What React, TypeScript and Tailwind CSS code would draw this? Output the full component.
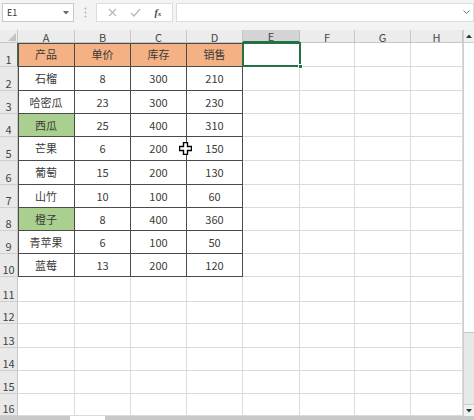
import React from 'react';

const cols = [
  { key: 'A', w: 'w-[57px]' },
  { key: 'B', w: 'w-[56px]' },
  { key: 'C', w: 'w-[56px]' },
  { key: 'D', w: 'w-[56px]' },
  { key: 'E', w: 'w-[57px]' },
  { key: 'F', w: 'w-[55px]' },
  { key: 'G', w: 'w-[56px]' },
  { key: 'H', w: 'w-[52px]' },
];

const rowHeights = [
  'h-[24px]', 'h-[24px]', 'h-[23px]', 'h-[23px]', 'h-[24px]', 'h-[24px]', 'h-[23px]', 'h-[23px]',
  'h-[23px]', 'h-[23px]', 'h-[25px]', 'h-[22px]', 'h-[24px]', 'h-[23px]', 'h-[23px]', 'h-[22px]',
];

const table: string[][] = [
  ['产品', '单价', '库存', '销售'],
  ['石榴', '8', '300', '210'],
  ['哈密瓜', '23', '300', '230'],
  ['西瓜', '25', '400', '310'],
  ['芒果', '6', '200', '150'],
  ['葡萄', '15', '200', '130'],
  ['山竹', '10', '100', '60'],
  ['橙子', '8', '400', '360'],
  ['青苹果', '6', '100', '50'],
  ['蓝莓', '13', '200', '120'],
];

const greenRows = [3, 7];

function cellClass(r: number, c: number) {
  const inTable = r < table.length && c < 4;
  let cls = 'box-border h-full flex items-center justify-center border-r border-b ';
  if (inTable) {
    cls += 'border-[#4a4a4a] ';
    if (r === 0) cls += 'bg-[#f4b183] ';
    else if (c === 0 && greenRows.includes(r)) cls += 'bg-[#a9d08e] ';
    else cls += 'bg-white ';
    if (r === 0 && c === 0) cls += 'shadow-[inset_1px_1px_0_#4a4a4a] ';
    else if (r === 0) cls += 'shadow-[inset_0_1px_0_#4a4a4a] ';
    else if (c === 0) cls += 'shadow-[inset_1px_0_0_#4a4a4a] ';
  } else {
    cls += 'bg-white border-[#dadada] ';
  }
  return cls;
}

function Toolbar() {
  return (
    <div className="h-[30px] flex items-center pl-[2px] pb-[5px] gap-[3px] bg-[#f3f3f3]">
      <div className="w-[72px] h-[19px] bg-white border border-[#c8c8c8] flex items-center justify-between pl-[4px] pr-[4px]">
        <span className="text-[9px] text-[#333]">E1</span>
        <svg width="6" height="4" viewBox="0 0 6 4">
          <path d="M0 0 L6 0 L3 3.5 Z" fill="#666" />
        </svg>
      </div>
      <div className="w-[16px] flex justify-center">
        <svg width="3" height="11" viewBox="0 0 3 11">
          <circle cx="1.5" cy="1.5" r="0.9" fill="#b0b0b0" />
          <circle cx="1.5" cy="5.5" r="0.9" fill="#b0b0b0" />
          <circle cx="1.5" cy="9.5" r="0.9" fill="#b0b0b0" />
        </svg>
      </div>
      <div className="w-[77px] h-[19px] bg-white border border-[#dcdcdc] flex items-center justify-around px-[4px]">
        <svg width="9" height="9" viewBox="0 0 9 9">
          <path d="M1 1 L8 8 M8 1 L1 8" stroke="#b8b8b8" strokeWidth="1.2" />
        </svg>
        <svg width="11" height="9" viewBox="0 0 11 9">
          <path d="M1 5 L4 8 L10 1" stroke="#b8b8b8" strokeWidth="1.3" fill="none" />
        </svg>
        <span className="text-[10px] italic text-[#444] font-['Liberation_Serif',serif] font-bold leading-none">
          f<span className="text-[7px]">x</span>
        </span>
      </div>
      <div className="flex-1 h-[19px] bg-white border border-[#dcdcdc] flex items-center justify-end pr-[3px]">
        <svg width="7" height="5" viewBox="0 0 7 5">
          <path d="M0.5 0.5 L3.5 3.5 L6.5 0.5" stroke="#777" strokeWidth="1" fill="none" />
        </svg>
      </div>
    </div>
  );
}

function ColumnHeader() {
  return (
    <div className="flex h-[13px]">
      <div className="w-[18px] h-full box-border border-r border-b border-[#c6c6c6] bg-[#ececec] flex items-end justify-end pr-[1px] pb-[1px]">
        <svg width="8" height="8" viewBox="0 0 8 8">
          <path d="M8 0 L8 8 L0 8 Z" fill="#c2c2c2" />
        </svg>
      </div>
      {cols.map((c) => (
        <div
          key={c.key}
          className={
            c.w +
            ' h-full box-border border-r flex items-center justify-center pt-[2px] text-[11px] leading-none text-[#444] ' +
            (c.key === 'E'
              ? 'bg-[#d4d4d4] border-b-2 border-b-[#217346] border-r-[#bdbdbd]'
              : 'bg-[#ececec] border-b border-[#c6c6c6]')
          }
        >
          {c.key}
        </div>
      ))}
    </div>
  );
}

function Sheet() {
  return (
    <div className="relative w-[463px]">
      <ColumnHeader />
      {rowHeights.map((h, r) => (
        <div key={r} className={'flex ' + h}>
          <div
            className={
              'w-[18px] h-full box-border border-b border-r flex items-end justify-center pb-[1px] text-[11px] leading-none text-[#444] bg-[#e9e9e9] border-b-[#cfcfcf] ' +
              (r === 0 ? 'border-r-[#3f6d52]' : 'border-r-[#c6c6c6]')
            }
          >
            {r + 1}
          </div>
          {cols.map((c, ci) => (
            <div key={c.key} className={c.w + ' h-full'}>
              <div className={cellClass(r, ci)}>
                <span className="text-[11px] text-[#3a3a3a] leading-none">
                  {r < table.length && ci < 4 ? table[r][ci] : ''}
                </span>
              </div>
            </div>
          ))}
        </div>
      ))}

      {/* active cell E1 */}
      <div className="absolute left-[242px] top-[12px] w-[59px] h-[25px] border-2 border-[#217346] pointer-events-none">
        <div className="absolute -right-[4px] -bottom-[4px] w-[5px] h-[5px] bg-[#217346] border border-white" />
      </div>

      {/* mouse cursor */}
      <svg className="absolute left-[179px] top-[112px]" width="13" height="13" viewBox="0 0 13 13">
        <path
          d="M4.5 0.5 H8.5 V4.5 H12.5 V8.5 H8.5 V12.5 H4.5 V8.5 H0.5 V4.5 H4.5 Z"
          fill="white"
          stroke="black"
          strokeWidth="1.4"
        />
      </svg>
    </div>
  );
}

function VScroll() {
  return (
    <div className="w-[11px] flex flex-col bg-[#e8e8e8] border-l border-[#cfcfcf]">
      <div className="h-[13px] bg-[#f0f0f0] border-b border-[#cfcfcf] flex items-center justify-center">
        <svg width="6" height="4" viewBox="0 0 6 4">
          <path d="M0 4 L6 4 L3 0.5 Z" fill="#333" />
        </svg>
      </div>
      <div className="h-[290px] bg-white border-b border-[#c8c8c8]" />
      <div className="flex-1" />
      <div className="h-[12px] bg-[#f0f0f0] border-t border-[#cfcfcf] flex items-center justify-center">
        <svg width="6" height="4" viewBox="0 0 6 4">
          <path d="M0 0 L6 0 L3 3.5 Z" fill="#333" />
        </svg>
      </div>
    </div>
  );
}

export default function App() {
  return (
    <div className="w-[474px] h-[420px] overflow-hidden bg-[#f3f3f3] font-['Noto_Sans_CJK_SC','Liberation_Sans',sans-serif] select-none">
      <Toolbar />
      <div className="flex h-[386px]">
        <Sheet />
        <VScroll />
      </div>
      <div className="h-[4px] flex bg-[#c9c9c9]">
        <div className="w-[70px]" />
        <div className="w-[35px] bg-white" />
      </div>
    </div>
  );
}
